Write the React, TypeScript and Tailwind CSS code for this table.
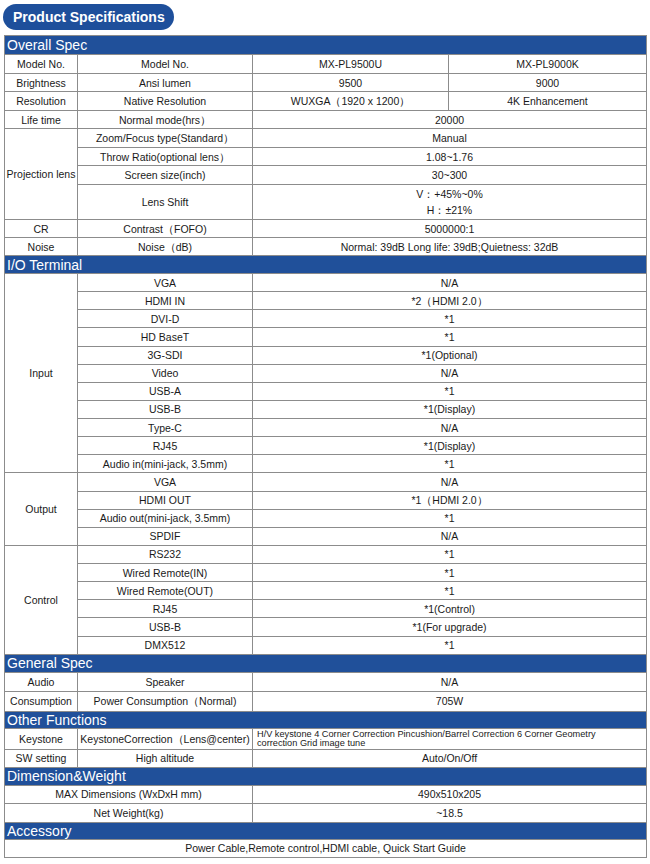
import React from 'react';

const td = "border border-[#8c8c8c] text-center align-middle p-0 text-[10.5px] leading-[12px] text-[#1a1a1a]";

const Section = ({ title, h = 18 }: { title: string; h?: number }) => (
  <tr style={{ height: h }}>
    <td colSpan={4} className="border border-[#8c8c8c] bg-[#20509a] text-white text-[14px] leading-[16px] px-[2px] p-0 align-middle">
      {title}
    </td>
  </tr>
);

const ioInput: [string, string][] = [
  ['VGA', 'N/A'],
  ['HDMI IN', '*2（HDMI 2.0）'],
  ['DVI-D', '*1'],
  ['HD BaseT', '*1'],
  ['3G-SDI', '*1(Optional)'],
  ['Video', 'N/A'],
  ['USB-A', '*1'],
  ['USB-B', '*1(Display)'],
  ['Type-C', 'N/A'],
  ['RJ45', '*1(Display)'],
  ['Audio in(mini-jack, 3.5mm)', '*1'],
];

const ioOutput: [string, string][] = [
  ['VGA', 'N/A'],
  ['HDMI OUT', '*1（HDMI 2.0）'],
  ['Audio out(mini-jack, 3.5mm)', '*1'],
  ['SPDIF', 'N/A'],
];

const ioControl: [string, string][] = [
  ['RS232', '*1'],
  ['Wired Remote(IN)', '*1'],
  ['Wired Remote(OUT)', '*1'],
  ['RJ45', '*1(Control)'],
  ['USB-B', '*1(For upgrade)'],
  ['DMX512', '*1'],
];

const Group = ({ label, rows }: { label: string; rows: [string, string][] }) => (
  <>
    {rows.map(([k, v], i) => (
      <tr key={i} style={{ height: 18.14 }}>
        {i === 0 && (
          <td rowSpan={rows.length} className={td}>
            {label}
          </td>
        )}
        <td className={td}>{k}</td>
        <td colSpan={2} className={td}>
          {v}
        </td>
      </tr>
    ))}
  </>
);

export default function App() {
  return (
    <div className="w-[650px] h-[864px] bg-white overflow-hidden" style={{ fontFamily: '"Liberation Sans", Arial, sans-serif' }}>
      <div className="pt-[4px] pl-[3px]">
        <div className="w-[171px] h-[26px] rounded-full bg-[#1e4f9b] flex items-center pl-[10px] text-white font-bold text-[14px]">
          Product Specifications
        </div>
      </div>
      <table className="mt-[5px] ml-[4px] w-[642px] table-fixed border-collapse">
        <colgroup>
          <col style={{ width: 73 }} />
          <col style={{ width: 175 }} />
          <col style={{ width: 196 }} />
          <col style={{ width: 198 }} />
        </colgroup>
        <tbody>
          <Section title="Overall Spec" h={19} />
          <tr className="h-[19px]">
            <td className={td}>Model No.</td>
            <td className={td}>Model No.</td>
            <td className={td}>MX-PL9500U</td>
            <td className={td}>MX-PL9000K</td>
          </tr>
          <tr className="h-[18px]">
            <td className={td}>Brightness</td>
            <td className={td}>Ansi lumen</td>
            <td className={td}>9500</td>
            <td className={td}>9000</td>
          </tr>
          <tr className="h-[19px]">
            <td className={td}>Resolution</td>
            <td className={td}>Native Resolution</td>
            <td className={td}>WUXGA（1920 x 1200）</td>
            <td className={td}>4K Enhancement</td>
          </tr>
          <tr className="h-[18px]">
            <td className={td}>Life time</td>
            <td className={td}>Normal mode(hrs）</td>
            <td colSpan={2} className={td}>20000</td>
          </tr>
          <tr className="h-[19px]">
            <td rowSpan={4} className={td}>Projection lens</td>
            <td className={td}>Zoom/Focus type(Standard）</td>
            <td colSpan={2} className={td}>Manual</td>
          </tr>
          <tr className="h-[18px]">
            <td className={td}>Throw Ratio(optional lens）</td>
            <td colSpan={2} className={td}>1.08~1.76</td>
          </tr>
          <tr className="h-[19px]">
            <td className={td}>Screen size(inch)</td>
            <td colSpan={2} className={td}>30~300</td>
          </tr>
          <tr className="h-[35px]">
            <td className={td}>Lens Shift</td>
            <td colSpan={2} className={td}>
              <div className="leading-[16px]">V：+45%~0%</div>
              <div className="leading-[16px]">H：±21%</div>
            </td>
          </tr>
          <tr className="h-[18px]">
            <td className={td}>CR</td>
            <td className={td}>Contrast（FOFO)</td>
            <td colSpan={2} className={td}>5000000:1</td>
          </tr>
          <tr className="h-[18px]">
            <td className={td}>Noise</td>
            <td className={td}>Noise（dB)</td>
            <td colSpan={2} className={td}>Normal: 39dB Long life: 39dB;Quietness: 32dB</td>
          </tr>

          <Section title="I/O Terminal" />
          <Group label="Input" rows={ioInput} />
          <Group label="Output" rows={ioOutput} />
          <Group label="Control" rows={ioControl} />

          <Section title="General Spec" />
          <tr className="h-[19px]">
            <td className={td}>Audio</td>
            <td className={td}>Speaker</td>
            <td colSpan={2} className={td}>N/A</td>
          </tr>
          <tr className="h-[20px]">
            <td className={td}>Consumption</td>
            <td className={td}>Power Consumption（Normal)</td>
            <td colSpan={2} className={td}>705W</td>
          </tr>

          <Section title="Other Functions" h={17} />
          <tr className="h-[21px]">
            <td className={td}>Keystone</td>
            <td className={td}>KeystoneCorrection（Lens@center)</td>
            <td colSpan={2} className={td + " !text-left !text-[9.2px] !leading-[9px] pl-[4px]"}>
              H/V keystone 4 Corner Correction Pincushion/Barrel Correction 6 Corner Geometry
              <br />
              correction Grid image tune
            </td>
          </tr>
          <tr className="h-[18px]">
            <td className={td}>SW setting</td>
            <td className={td}>High altitude</td>
            <td colSpan={2} className={td}>Auto/On/Off</td>
          </tr>

          <Section title="Dimension&Weight" />
          <tr className="h-[18px]">
            <td colSpan={2} className={td}>MAX Dimensions (WxDxH mm)</td>
            <td colSpan={2} className={td}>490x510x205</td>
          </tr>
          <tr className="h-[19px]">
            <td colSpan={2} className={td}>Net Weight(kg)</td>
            <td colSpan={2} className={td}>~18.5</td>
          </tr>

          <Section title="Accessory" h={17} />
          <tr className="h-[18px]">
            <td colSpan={4} className={td}>Power Cable,Remote control,HDMI cable, Quick Start Guide</td>
          </tr>
        </tbody>
      </table>
    </div>
  );
}
